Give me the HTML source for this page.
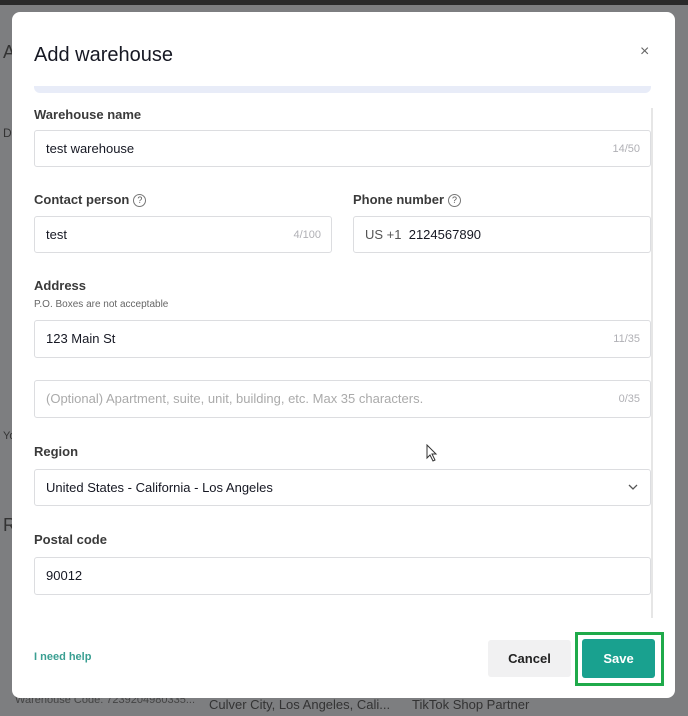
<html><head><style>
body{margin:0;width:688px;height:716px;background:#7d7e80;position:relative;overflow:hidden;font-family:"Liberation Sans",sans-serif;}
.top{position:absolute;left:0;top:0;width:688px;height:5px;background:#2a2a2a}
.bg{position:absolute;color:#333;font-size:13px}
.m{position:absolute;left:12px;top:12px;width:663px;height:686px;background:#fff;border-radius:8px}
.a{position:absolute;}
h1{position:absolute;left:22px;top:32px;margin:0;font-size:20px;font-weight:normal;color:#161823}
.lbl{position:absolute;font-size:13px;color:#3a3a3a;font-weight:bold}
.in{position:absolute;border:1px solid #dcdde0;border-radius:3px;height:37px;box-sizing:border-box;font-size:13px;color:#161823;line-height:36px;padding-left:11px}
.cnt{position:absolute;right:10px;top:0;font-size:11px;color:#b0b0b5}
.q{display:inline-block;width:11px;height:11px;border:1px solid #777;border-radius:50%;font-size:9px;line-height:11px;text-align:center;font-weight:normal;color:#555;margin-left:4px;vertical-align:1px}
</style></head><body>
<div class="top"></div>
<div class="bg" style="left:3px;top:42px;font-size:18px">A</div>
<div class="bg" style="left:3px;top:126px;font-size:12px">D</div>
<div class="bg" style="left:3px;top:430px;font-size:11px">Yo</div>
<div class="bg" style="left:3px;top:515px;font-size:18px">R</div>
<div class="bg" style="left:15px;top:694px;font-size:11px;color:#444">Warehouse Code: 7239204980335...</div>
<div class="bg" style="left:209px;top:697px;font-size:13px">Culver City, Los Angeles, Cali...</div>
<div class="bg" style="left:412px;top:697px;font-size:13px">TikTok Shop Partner</div>
<div class="m">
<h1>Add warehouse</h1>
<div class="a" style="left:628px;top:31px;font-size:16px;color:#666">×</div>
<div class="a" style="left:22px;top:74px;width:617px;height:7px;background:#e8ecf8;border-radius:0 0 6px 6px"></div>
<div class="a" style="left:639px;top:96px;width:2px;height:510px;background:#e6e6e6"></div>
<div class="lbl" style="left:22px;top:95px">Warehouse name</div>
<div class="in" style="left:22px;top:118px;width:617px">test warehouse<span class="cnt">14/50</span></div>
<div class="lbl" style="left:22px;top:180px">Contact person<span class="q">?</span></div>
<div class="in" style="left:22px;top:204px;width:298px">test<span class="cnt">4/100</span></div>
<div class="lbl" style="left:341px;top:180px">Phone number<span class="q">?</span></div>
<div class="in" style="left:341px;top:204px;width:298px"><span style="color:#555">US +1</span>&nbsp; 2124567890</div>
<div class="lbl" style="left:22px;top:266px">Address</div>
<div class="a" style="left:22px;top:287px;font-size:10px;color:#666">P.O. Boxes are not acceptable</div>
<div class="in" style="left:22px;top:308px;width:617px;height:38px">123 Main St<span class="cnt">11/35</span></div>
<div class="in" style="left:22px;top:368px;width:617px;height:38px;color:#aaa">(Optional) Apartment, suite, unit, building, etc. Max 35 characters.<span class="cnt">0/35</span></div>
<svg class="a" style="left:414px;top:432px" width="12" height="18" viewBox="0 0 12 18"><path d="M1 1 L1 14 L4 11 L7 17 L9 16 L6 10 L10 10 Z" fill="#fff" stroke="#333" stroke-width="1"/></svg>
<div class="lbl" style="left:22px;top:432px">Region</div>
<div class="in" style="left:22px;top:457px;width:617px">United States - California - Los Angeles<svg style="position:absolute;right:12px;top:14px" width="10" height="6" viewBox="0 0 10 6"><path d="M1 1 L5 5 L9 1" fill="none" stroke="#555" stroke-width="1.3"/></svg></div>
<div class="lbl" style="left:22px;top:520px">Postal code</div>
<div class="in" style="left:22px;top:545px;width:617px;height:38px">90012</div>
<div class="a" style="left:22px;top:639px;font-size:11px;font-weight:bold;color:#3a9f92">I need help</div>
<div class="a" style="left:476px;top:628px;width:83px;height:37px;background:#f1f1f2;border-radius:3px;font-size:13px;font-weight:bold;color:#222;text-align:center;line-height:37px">Cancel</div>
<div class="a" style="left:563px;top:620px;width:89px;height:54px;border:3px solid #1faa4a;box-sizing:border-box"></div>
<div class="a" style="left:570px;top:627px;width:73px;height:39px;background:#19a18f;border-radius:3px;font-size:13px;font-weight:bold;color:#fff;text-align:center;line-height:39px">Save</div>
</div>
</body></html>
